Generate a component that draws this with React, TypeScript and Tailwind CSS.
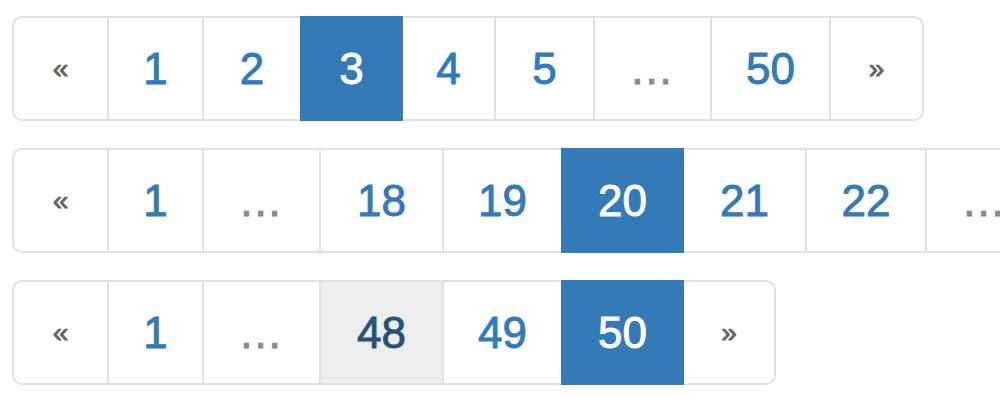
type Page = {
  label: string;
  w: number;
  kind?: "active" | "hover" | "arrow" | "gap";
};

const rows: Page[][] = [
  [
    { label: "«", w: 97, kind: "arrow" },
    { label: "1", w: 97 },
    { label: "2", w: 100 },
    { label: "3", w: 103, kind: "active" },
    { label: "4", w: 95 },
    { label: "5", w: 101 },
    { label: "...", w: 119, kind: "gap" },
    { label: "50", w: 121 },
    { label: "»", w: 95, kind: "arrow" },
  ],
  [
    { label: "«", w: 97, kind: "arrow" },
    { label: "1", w: 97 },
    { label: "...", w: 119, kind: "gap" },
    { label: "18", w: 125 },
    { label: "19", w: 121 },
    { label: "20", w: 123, kind: "active" },
    { label: "21", w: 125 },
    { label: "22", w: 122 },
    { label: "...", w: 119, kind: "gap" },
  ],
  [
    { label: "«", w: 97, kind: "arrow" },
    { label: "1", w: 97 },
    { label: "...", w: 119, kind: "gap" },
    { label: "48", w: 125, kind: "hover" },
    { label: "49", w: 121 },
    { label: "50", w: 123, kind: "active" },
    { label: "»", w: 94, kind: "arrow" },
  ],
];

function Cell({ page, first, last }: { page: Page; first: boolean; last: boolean }) {
  let tone = "bg-white text-[#337ab7] border-[#e1e1e1]";
  if (page.kind === "active") tone = "relative z-10 bg-[#337ab7] text-white border-[#337ab7]";
  if (page.kind === "hover") tone = "bg-[#eeeeee] text-[#23527c] border-[#e1e1e1]";
  if (page.kind === "arrow") tone = "bg-white text-[#666] border-[#e1e1e1] text-[28px]";
  if (page.kind === "gap") tone = "bg-white text-[#888] border-[#e1e1e1] tracking-[2px]";

  return (
    <div
      style={{ width: page.w }}
      className={`flex h-[105px] shrink-0 items-center justify-center border-2 ${
        first ? "rounded-l-[10px]" : "-ml-[2px]"
      } ${last ? "rounded-r-[10px]" : ""} ${tone}`}
    >
      <span className="[-webkit-text-stroke:0.9px_currentColor]">{page.label}</span>
    </div>
  );
}

export default function App() {
  return (
    <div className="h-[420px] w-[1000px] overflow-hidden bg-white pl-[12px] pt-[16px] font-['Liberation_Sans',Arial,sans-serif] text-[44px] leading-none">
      <div className="flex flex-col gap-[27px]">
        {rows.map((row, r) => (
          <div key={r} className="flex">
            {row.map((page, i) => (
              <Cell
                key={i}
                page={page}
                first={i === 0}
                last={i === row.length - 1 && r !== 1}
              />
            ))}
          </div>
        ))}
      </div>
    </div>
  );
}
